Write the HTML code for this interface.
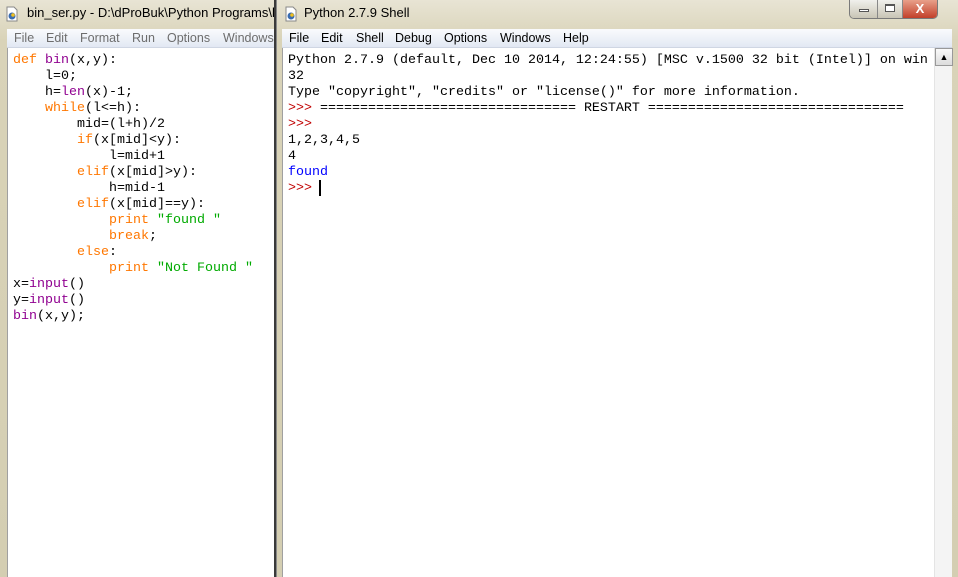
<!DOCTYPE html>
<html><head><style>
*{margin:0;padding:0;box-sizing:border-box}
body{width:958px;height:577px;overflow:hidden;background:#d6d0b4;position:relative;font-family:"Liberation Sans",sans-serif}
.win{position:absolute;top:0;height:577px;background:linear-gradient(#e8e4d4,#d9d3b8 40px,#d4ceb2)}
.title{position:absolute;top:5px;font-size:13px;color:#000;white-space:nowrap}
.menu{position:absolute;top:29px;height:19px;background:linear-gradient(#fafbfd,#e2e8f3);font-size:12.5px;white-space:nowrap;border-bottom:1px solid #cfd6e3}
.menu span{position:absolute;top:2px}
.client{position:absolute;top:48px;bottom:0;background:#fff}
pre{font-family:"Liberation Mono",monospace;font-size:13.33px;line-height:16px;position:absolute}
.k{color:#ff7700}.b{color:#900090}.s{color:#00aa00}.p{color:#c00000}.o{color:#0000ff}
.icon{position:absolute;top:6px;width:14px;height:16px}
</style></head><body>
<div class="win" style="left:0;width:276px">
 <svg class="icon" style="left:5px" viewBox="0 0 14 16"><path d="M2 1h7l3 3v11H2z" fill="#fff" stroke="#888"/><circle cx="7" cy="10" r="3.5" fill="#3a6cb0"/><circle cx="8" cy="9" r="1.8" fill="#f0c020"/></svg>
 <div class="title" style="left:27px">bin_ser.py - D:\dProBuk\Python Programs\bin_</div>
 <div class="menu" style="left:7px;width:267px;color:#6d6d6d">
  <span style="left:7px">File</span><span style="left:39px">Edit</span><span style="left:73px">Format</span><span style="left:125px">Run</span><span style="left:160px">Options</span><span style="left:216px">Windows</span>
 </div>
 <div class="client" style="left:7px;width:267px;border-left:1px solid #a0a0a0">
<pre style="left:5px;top:5px"><span class="k">def</span> <span class="b">bin</span>(x,y):
    l=0;
    h=<span class="b">len</span>(x)-1;
    <span class="k">while</span>(l&lt;=h):
        mid=(l+h)/2
        <span class="k">if</span>(x[mid]&lt;y):
            l=mid+1
        <span class="k">elif</span>(x[mid]&gt;y):
            h=mid-1
        <span class="k">elif</span>(x[mid]==y):
            <span class="k">print</span> <span class="s">"found "</span>
            <span class="k">break</span>;
        <span class="k">else</span>:
            <span class="k">print</span> <span class="s">"Not Found "</span>
x=<span class="b">input</span>()
y=<span class="b">input</span>()
<span class="b">bin</span>(x,y);</pre>
 </div>
</div>
<div style="position:absolute;left:274px;top:0;width:2px;height:577px;background:#3a3a3a"></div>
<div class="win" style="left:276px;width:682px;border-left:1px solid #888">
 <svg class="icon" style="left:7px" viewBox="0 0 14 16"><path d="M2 1h7l3 3v11H2z" fill="#fff" stroke="#888"/><circle cx="7" cy="10" r="3.5" fill="#3a6cb0"/><circle cx="8" cy="9" r="1.8" fill="#f0c020"/></svg>
 <div class="title" style="left:27px">Python 2.7.9 Shell</div>
 <div style="position:absolute;left:572px;top:0;width:89px;height:19px;border:1px solid #7a7a7a;border-top:none;border-radius:0 0 5px 5px;overflow:hidden;display:flex">
  <div style="width:28px;background:linear-gradient(#f0f0ec,#c9c5b5);border-right:1px solid #888;position:relative"><div style="position:absolute;left:9px;top:9px;width:10px;height:3px;border:1px solid #555;background:#fff"></div></div>
  <div style="width:25px;background:linear-gradient(#f0f0ec,#c9c5b5);border-right:1px solid #888;position:relative"><div style="position:absolute;left:7px;top:4px;width:10px;height:8px;border:1px solid #555;border-top-width:2px;background:#fff"></div></div>
  <div style="flex:1;background:linear-gradient(#e8a08a,#c2402a);color:#fff;font-weight:bold;font-size:13px;text-align:center;line-height:17px">X</div>
 </div>
 <div class="menu" style="left:5px;width:670px">
  <span style="left:7px">File</span><span style="left:39px">Edit</span><span style="left:74px">Shell</span><span style="left:113px">Debug</span><span style="left:162px">Options</span><span style="left:218px">Windows</span><span style="left:281px">Help</span>
 </div>
 <div class="client" style="left:5px;width:670px;border-left:1px solid #a0a0a0">
<pre style="left:5px;top:5px">Python 2.7.9 (default, Dec 10 2014, 12:24:55) [MSC v.1500 32 bit (Intel)] on win
32
Type "copyright", "credits" or "license()" for more information.
<span class="p">&gt;&gt;&gt;</span> ================================ RESTART ================================
<span class="p">&gt;&gt;&gt;</span> 
1,2,3,4,5
4
<span class="o">found</span>
<span class="p">&gt;&gt;&gt;</span> </pre>
  <div style="position:absolute;left:36px;top:132px;width:2px;height:16px;background:#000"></div>
  <div style="position:absolute;right:0;top:0;width:18px;bottom:0;background:#f4f4f4;border-left:1px solid #e4e4e4">
   <div style="width:18px;height:18px;background:linear-gradient(#fafafa,#dcdcdc);border:1px solid #999;font-size:9px;text-align:center;line-height:16px">▲</div>
  </div>
 </div>
</div>
</body></html>
